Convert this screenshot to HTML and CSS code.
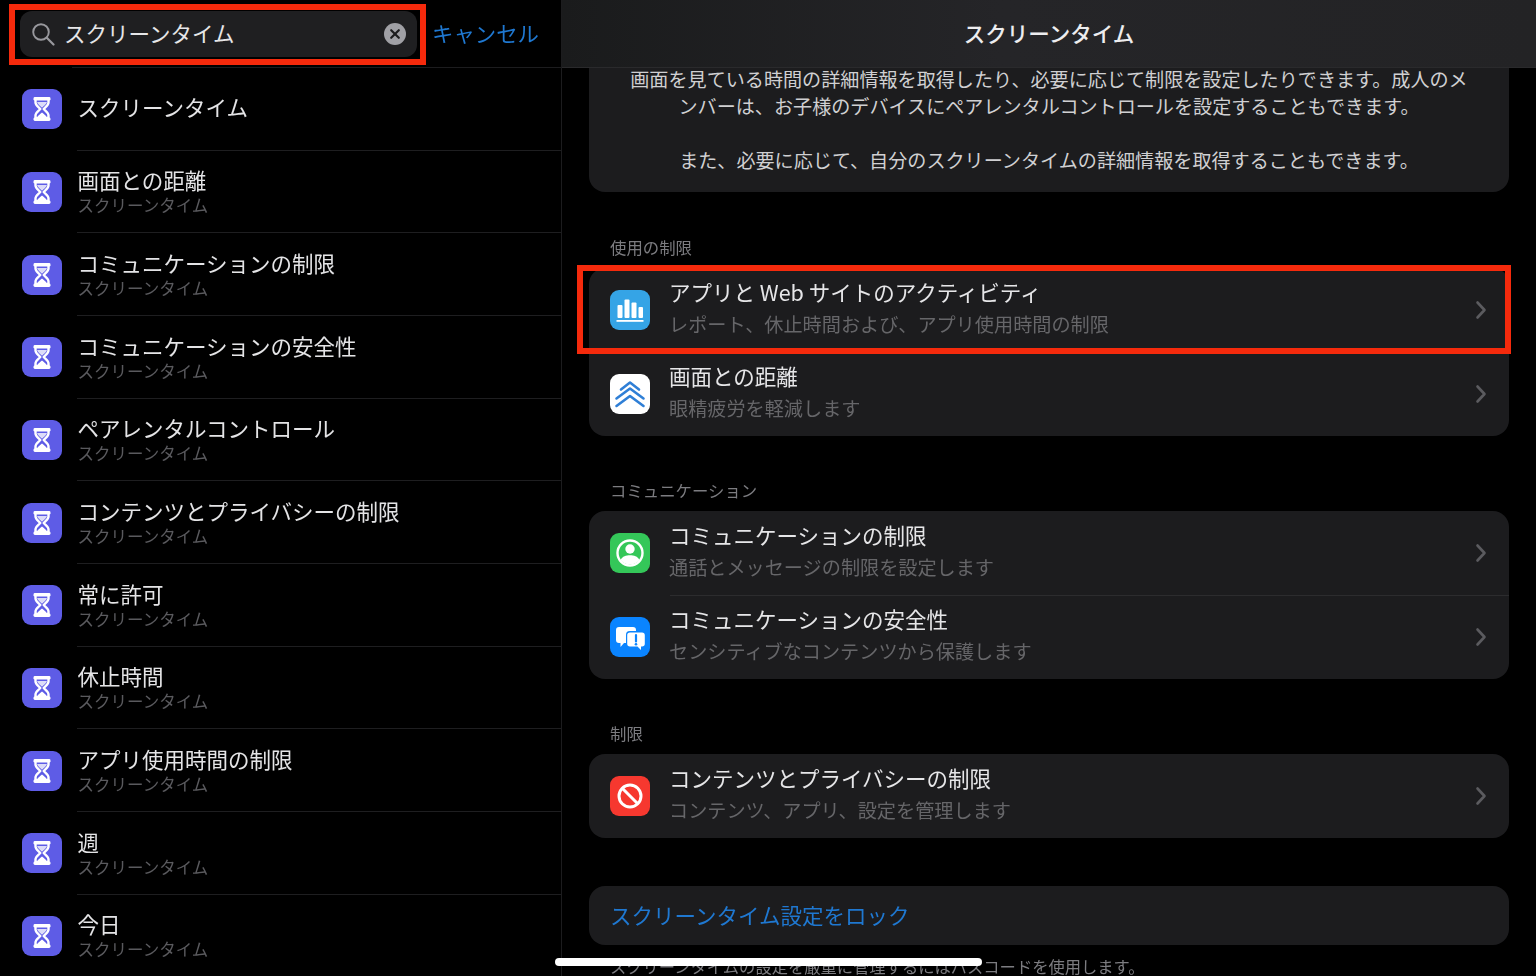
FILE: index.html
```html
<!DOCTYPE html>
<html lang="ja">
<head>
<meta charset="utf-8">
<title>スクリーンタイム</title>
<link rel="stylesheet" href="styles.css">
</head>
<body>
<svg class="defs" width="0" height="0" aria-hidden="true">
  <symbol id="hourglass" viewBox="0 0 40 40">
    <rect x="11.500" y="8" width="17" height="3.600" rx="1.400" fill="#fff"/>
    <rect x="11.500" y="28.400" width="17" height="3.600" rx="1.400" fill="#fff"/>
    <path d="M13.500 11v2.500c0 3 4 5 4.800 6.500-.8 1.500-4.800 3.500-4.800 6.500V29h13v-2.500c0-3-4-5-4.800-6.500.8-1.500 4.800-3.500 4.800-6.500V11" fill="none" stroke="#fff" stroke-width="2.400"/>
    <path d="M15 13h10c-.8 2.500-3.500 4-5 5.800-1.500-1.800-4.200-3.300-5-5.800z" fill="#dcdcf8"/>
    <path d="M15.500 28c.5-2 3-3 4.500-4.600 1.500 1.600 4 2.600 4.500 4.600z" fill="#fff"/>
  </symbol>
  <symbol id="chev" viewBox="0 0 12 20">
    <path d="M2.500 2.500 9.500 10l-7 7.500" fill="none" stroke="#5b5b5f" stroke-width="2.600" stroke-linecap="round" stroke-linejoin="round"/>
  </symbol>
</svg>

<div class="app">
  <aside class="side">
    <div class="side-head">
      <div class="search">
        <svg class="search-ico" viewBox="0 0 24 24" width="24" height="24"><circle cx="10" cy="10" r="7.800" fill="none" stroke="#98989d" stroke-width="1.900"/><path d="M15.800 15.800 22.500 22.500" stroke="#98989d" stroke-width="2.200" stroke-linecap="round"/></svg>
        <span class="search-text">スクリーンタイム</span>
        <svg class="search-clear" viewBox="0 0 22 22" width="22" height="22"><circle cx="11" cy="11" r="11" fill="#a0a0a5"/><path d="M7.200 7.200l7.600 7.600M14.800 7.200l-7.600 7.600" stroke="#1c1c1e" stroke-width="2.200" stroke-linecap="round"/></svg>
      </div>
      <span class="cancel">キャンセル</span>
    </div>
    <ul class="results">
      <li class="res"><svg class="res-ico"><use href="#hourglass"/></svg><div class="res-body"><div class="res-title">スクリーンタイム</div></div></li>
      <li class="res"><svg class="res-ico"><use href="#hourglass"/></svg><div class="res-body"><div class="res-title">画面との距離</div><div class="res-sub">スクリーンタイム</div></div></li>
      <li class="res"><svg class="res-ico"><use href="#hourglass"/></svg><div class="res-body"><div class="res-title">コミュニケーションの制限</div><div class="res-sub">スクリーンタイム</div></div></li>
      <li class="res"><svg class="res-ico"><use href="#hourglass"/></svg><div class="res-body"><div class="res-title">コミュニケーションの安全性</div><div class="res-sub">スクリーンタイム</div></div></li>
      <li class="res"><svg class="res-ico"><use href="#hourglass"/></svg><div class="res-body"><div class="res-title">ペアレンタルコントロール</div><div class="res-sub">スクリーンタイム</div></div></li>
      <li class="res"><svg class="res-ico"><use href="#hourglass"/></svg><div class="res-body"><div class="res-title">コンテンツとプライバシーの制限</div><div class="res-sub">スクリーンタイム</div></div></li>
      <li class="res"><svg class="res-ico"><use href="#hourglass"/></svg><div class="res-body"><div class="res-title">常に許可</div><div class="res-sub">スクリーンタイム</div></div></li>
      <li class="res"><svg class="res-ico"><use href="#hourglass"/></svg><div class="res-body"><div class="res-title">休止時間</div><div class="res-sub">スクリーンタイム</div></div></li>
      <li class="res"><svg class="res-ico"><use href="#hourglass"/></svg><div class="res-body"><div class="res-title">アプリ使用時間の制限</div><div class="res-sub">スクリーンタイム</div></div></li>
      <li class="res"><svg class="res-ico"><use href="#hourglass"/></svg><div class="res-body"><div class="res-title">週</div><div class="res-sub">スクリーンタイム</div></div></li>
      <li class="res"><svg class="res-ico"><use href="#hourglass"/></svg><div class="res-body"><div class="res-title">今日</div><div class="res-sub">スクリーンタイム</div></div></li>
    </ul>
  </aside>

  <main class="main">
    <header class="main-head">スクリーンタイム</header>
    <div class="content">
      <section class="card intro">
        <p>画面を見ている時間の詳細情報を取得したり、必要に応じて制限を設定したりできます。成人のメンバーは、お子様のデバイスにペアレンタルコントロールを設定することもできます。</p>
        <p class="intro-gap">また、必要に応じて、自分のスクリーンタイムの詳細情報を取得することもできます。</p>
      </section>

      <h2 class="label label-first">使用の制限</h2>
      <section class="card">
        <div class="row">
          <svg class="app-ico" viewBox="0 0 40 40"><rect width="40" height="40" rx="9" fill="#35a4e6"/><rect x="7.500" y="15" width="5" height="13" rx="1" fill="#fff"/><rect x="14.500" y="9.500" width="5" height="18.500" rx="1" fill="#fff"/><rect x="21.500" y="12.500" width="5" height="15.500" rx="1" fill="#fff"/><rect x="28.500" y="17" width="4.500" height="11" rx="1" fill="#fff"/><rect x="6.500" y="30" width="27" height="1.800" fill="#fff"/></svg>
          <div class="row-body"><div class="row-title">アプリと Web サイトのアクティビティ</div><div class="row-sub">レポート、休止時間および、アプリ使用時間の制限</div></div>
          <svg class="chev"><use href="#chev"/></svg>
        </div>
        <div class="row">
          <svg class="app-ico" viewBox="0 0 40 40"><rect width="40" height="40" rx="9" fill="#fff"/><path d="M11 15.500 20 8.500l9 7M6.500 24.500 20 14.500l13.500 10M6.500 32 20 22l13.500 10" fill="none" stroke="#2f7fd6" stroke-width="2.600" stroke-linecap="round" stroke-linejoin="round"/></svg>
          <div class="row-body"><div class="row-title">画面との距離</div><div class="row-sub">眼精疲労を軽減します</div></div>
          <svg class="chev"><use href="#chev"/></svg>
        </div>
      </section>

      <h2 class="label">コミュニケーション</h2>
      <section class="card">
        <div class="row">
          <svg class="app-ico" viewBox="0 0 40 40"><rect width="40" height="40" rx="9" fill="#34c759"/><circle cx="20" cy="20" r="12.500" fill="none" stroke="#fff" stroke-width="2.400"/><circle cx="20" cy="16" r="4.700" fill="#fff"/><path d="M10.500 27c2-3.800 5.500-4.800 9.500-4.800s7.500 1 9.500 4.800c-2.500 3-6 4.500-9.500 4.500s-7-1.500-9.500-4.500z" fill="#fff"/></svg>
          <div class="row-body"><div class="row-title">コミュニケーションの制限</div><div class="row-sub">通話とメッセージの制限を設定します</div></div>
          <svg class="chev"><use href="#chev"/></svg>
        </div>
        <div class="row">
          <svg class="app-ico" viewBox="0 0 40 40"><rect width="40" height="40" rx="9" fill="#0a84ff"/><path d="M9 10h14c2 0 3 1 3 3v1h-6c-3 0-4 1.500-4 4v8h-2l-3.500 4v-4H9c-2 0-3-1-3-3V13c0-2 1-3 3-3z" fill="#fff"/><path d="M20 15.500h12c1.800 0 2.800 1 2.800 2.800v8.400c0 1.800-1 2.800-2.800 2.800h-1v3.500l-3.500-3.500H20c-1.800 0-2.800-1-2.800-2.800v-8.400c0-1.800 1-2.800 2.800-2.800z" fill="#fff"/><path d="M26 18v6.500" stroke="#0a84ff" stroke-width="2.200" stroke-linecap="round"/><circle cx="26" cy="27.200" r="1.300" fill="#0a84ff"/></svg>
          <div class="row-body"><div class="row-title">コミュニケーションの安全性</div><div class="row-sub">センシティブなコンテンツから保護します</div></div>
          <svg class="chev"><use href="#chev"/></svg>
        </div>
      </section>

      <h2 class="label">制限</h2>
      <section class="card">
        <div class="row">
          <svg class="app-ico" viewBox="0 0 40 40"><rect width="40" height="40" rx="9" fill="#f6382f"/><circle cx="20" cy="20" r="11" fill="none" stroke="#fff" stroke-width="3"/><path d="M12.500 12.500l15 15" stroke="#fff" stroke-width="3"/></svg>
          <div class="row-body"><div class="row-title">コンテンツとプライバシーの制限</div><div class="row-sub">コンテンツ、アプリ、設定を管理します</div></div>
          <svg class="chev"><use href="#chev"/></svg>
        </div>
      </section>

      <section class="card lock">スクリーンタイム設定をロック</section>
      <p class="foot">スクリーンタイムの設定を厳重に管理するにはパスコードを使用します。</p>
    </div>
  </main>
</div>

<div class="mark mark-search"></div>
<div class="mark mark-row"></div>
<div class="home"></div>
</body>
</html>
```

FILE: styles.css
```css
* { box-sizing: border-box; }
html, body { margin: 0; padding: 0; height: 100%; }
body {
  width: 1536px;
  height: 976px;
  overflow: hidden;
  background: #000;
  color: #e6e6e8;
  font-family: "Noto Sans CJK JP", "Noto Sans", sans-serif;
  position: relative;
}
.defs { position: absolute; }
.app { display: flex; height: 976px; filter: blur(0.35px); }

/* sidebar */
.side { width: 562px; flex: none; border-right: 1px solid #1c1c1e; overflow: hidden; }
.side-head { height: 68px; display: flex; align-items: center; padding: 0 0 0 20px; position: relative; }
.side-head::after { content: ""; position: absolute; left: 72px; right: 0; bottom: 0; height: 1px; background: #1c1c1e; }
.search { width: 397px; height: 46px; margin-top: -1px; border-radius: 12px; background: #1f1f21; display: flex; align-items: center; padding: 0 11px 0 11px; }
.search-ico { flex: none; }
.search-text { flex: 1; margin-left: 9px; margin-top: -2px; font-size: 21.500px; line-height: 30px; color: #e6e6e8; }
.search-clear { flex: none; }
.cancel { margin-left: 15px; margin-top: -3px; font-size: 21.400px; line-height: 30px; color: #1f78d1; }
.results { list-style: none; margin: 0; padding: 0; }
.res { height: 82.670px; display: flex; align-items: center; padding-left: 21.500px; position: relative; }
.res::after { content: ""; position: absolute; left: 77px; right: 0; bottom: 0; height: 1px; background: #1e1e20; }
.res-ico { width: 40px; height: 40px; flex: none; border-radius: 9px; background: #5e5ce6; }
.res-body { margin-left: 16px; margin-top: -2px; }
.res-title { font-size: 21.500px; line-height: 28px; color: #e4e4e6; }
.res-title:only-child { margin-top: -2px; }
.res-sub { font-size: 16.500px; line-height: 20px; margin-top: 1px; color: #5a5a5e; }

/* main */
.main { flex: 1; min-width: 0; position: relative; overflow: hidden; }
.main-head {
  position: absolute; left: 0; right: 0; top: 0; z-index: 2;
  height: 68px; text-align: center; line-height: 66px;
  font-size: 21.500px; font-weight: 500; color: #ededef;
  background: linear-gradient(90deg, #1a1b1c 0%, #252528 45%, #232325 100%);
  border-bottom: 1px solid #2a2a2c;
}
.content { padding: 0 27px; }
.card { background: #1c1c1e; border-radius: 16px; overflow: hidden; }
.intro {
  padding: 65.500px 32px 18.500px;
  text-align: center;
  font-size: 19.100px; line-height: 27px; color: #d0d0d2;
}
.intro p { margin: 0; }
.intro .intro-gap { margin-top: 27px; }
.label { margin: 43px 0 8px; height: 24px; padding-left: 21px; font-size: 16.400px; font-weight: 400; line-height: 22px; color: #7c7c80; }
.label-first { margin-top: 44px; }
.row { height: 84px; display: flex; align-items: center; padding: 0 22px 0 21px; position: relative; }
.row + .row::before { content: ""; position: absolute; left: 81px; right: 0; top: 0; height: 1px; background: #2c2c2e; }
.app-ico { width: 40px; height: 40px; flex: none; display: block; }
.row-body { flex: 1; margin-left: 19px; margin-top: -2px; }
.row-title { font-size: 21.500px; line-height: 30px; color: #e6e6e8; }
.row-sub { font-size: 19.150px; line-height: 35px; color: #666669; }
.chev { width: 12px; height: 20px; flex: none; }
.lock { margin-top: 48px; height: 59px; line-height: 58px; padding-left: 21px; font-size: 21.500px; color: #1f78d1; }
.foot { margin: 11px 0 0; padding-left: 21px; font-size: 16.300px; line-height: 20px; color: #7c7c80; }

/* annotations */
.mark { position: absolute; border: 6px solid #f52a0c; pointer-events: none; }
.mark-search { left: 9px; top: 4px; width: 417px; height: 61px; }
.mark-row { left: 577px; top: 265px; width: 934px; height: 89px; }
.home { position: absolute; left: 555px; top: 958px; width: 427px; height: 8px; border-radius: 4px; background: #fff; }
```
